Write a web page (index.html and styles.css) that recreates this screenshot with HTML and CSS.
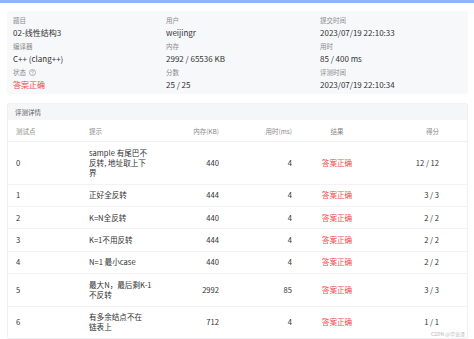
FILE: index.html
```html
<!DOCTYPE html>
<html lang="zh-CN">
<head>
    <meta charset="UTF-8">
    <meta name="viewport" content="width=device-width, initial-scale=1.0">
    <title>提交详情</title>
    <link rel="stylesheet" href="styles.css">
</head>
<body>
    <div class="topbar"></div>
    <div class="page">
        <div class="info-card">
            <div class="info-item">
                <div class="info-label">题目</div>
                <div class="info-value">02-线性结构3</div>
            </div>
            <div class="info-item">
                <div class="info-label">用户</div>
                <div class="info-value">weijingr</div>
            </div>
            <div class="info-item">
                <div class="info-label">提交时间</div>
                <div class="info-value">2023/07/19 22:10:33</div>
            </div>
            <div class="info-item">
                <div class="info-label">编译器</div>
                <div class="info-value">C++ (clang++)</div>
            </div>
            <div class="info-item">
                <div class="info-label">内存</div>
                <div class="info-value">2992 / 65536 KB</div>
            </div>
            <div class="info-item">
                <div class="info-label">用时</div>
                <div class="info-value">85 / 400 ms</div>
            </div>
            <div class="info-item">
                <div class="info-label">状态
                    <svg class="help-icon" viewBox="0 0 16 16" width="7" height="7">
                        <circle cx="8" cy="8" r="7" fill="none" stroke="#8a8a8a" stroke-width="1.4"/>
                        <path d="M5.8 6.2a2.2 2.2 0 1 1 3.2 2c-.7.4-1 .8-1 1.6" fill="none" stroke="#8a8a8a" stroke-width="1.4"/>
                        <circle cx="8" cy="11.8" r=".9" fill="#8a8a8a"/>
                    </svg>
                </div>
                <div class="info-value accepted">答案正确</div>
            </div>
            <div class="info-item">
                <div class="info-label">分数</div>
                <div class="info-value">25 / 25</div>
            </div>
            <div class="info-item">
                <div class="info-label">评测时间</div>
                <div class="info-value">2023/07/19 22:10:34</div>
            </div>
        </div>

        <div class="detail-card">
            <div class="detail-title">评测详情</div>
            <table class="detail-table">
                <colgroup>
                    <col class="c-case">
                    <col class="c-hint">
                    <col class="c-mem">
                    <col class="c-time">
                    <col class="c-result">
                    <col class="c-score">
                </colgroup>
                <thead>
                    <tr>
                        <th>测试点</th>
                        <th>提示</th>
                        <th class="num">内存(KB)</th>
                        <th class="num">用时(ms)</th>
                        <th class="center">结果</th>
                        <th class="num">得分</th>
                    </tr>
                </thead>
                <tbody>
                    <tr>
                        <td>0</td>
                        <td class="hint">sample 有尾巴不<br>反转, 地址取上下<br>界</td>
                        <td class="num">440</td>
                        <td class="num">4</td>
                        <td class="center accepted">答案正确</td>
                        <td class="num">12 / 12</td>
                    </tr>
                    <tr>
                        <td>1</td>
                        <td class="hint">正好全反转</td>
                        <td class="num">444</td>
                        <td class="num">4</td>
                        <td class="center accepted">答案正确</td>
                        <td class="num">3 / 3</td>
                    </tr>
                    <tr>
                        <td>2</td>
                        <td class="hint">K=N全反转</td>
                        <td class="num">440</td>
                        <td class="num">4</td>
                        <td class="center accepted">答案正确</td>
                        <td class="num">2 / 2</td>
                    </tr>
                    <tr>
                        <td>3</td>
                        <td class="hint">K=1不用反转</td>
                        <td class="num">444</td>
                        <td class="num">4</td>
                        <td class="center accepted">答案正确</td>
                        <td class="num">2 / 2</td>
                    </tr>
                    <tr>
                        <td>4</td>
                        <td class="hint">N=1 最小case</td>
                        <td class="num">440</td>
                        <td class="num">4</td>
                        <td class="center accepted">答案正确</td>
                        <td class="num">2 / 2</td>
                    </tr>
                    <tr>
                        <td>5</td>
                        <td class="hint">最大N，最后剩K-1<br>不反转</td>
                        <td class="num">2992</td>
                        <td class="num">85</td>
                        <td class="center accepted">答案正确</td>
                        <td class="num">3 / 3</td>
                    </tr>
                    <tr>
                        <td>6</td>
                        <td class="hint">有多余结点不在<br>链表上</td>
                        <td class="num">712</td>
                        <td class="num">4</td>
                        <td class="center accepted">答案正确</td>
                        <td class="num">1 / 1</td>
                    </tr>
                </tbody>
            </table>
            <div class="watermark">CSDN @华业泽</div>
        </div>
    </div>
</body>
</html>
```

FILE: styles.css
```css
body {
    font-family: "Noto Sans CJK SC", "Noto Sans", sans-serif;
    margin: 0;
    padding: 0;
    background-color: #fff;
    color: #333;
}
.topbar {
    height: 3px;
    background: #8cb6f4;
}
.page {
    padding: 8px 6px 0 7px;
}
.info-card {
    display: grid;
    grid-template-columns: 153px 154px 1fr;
    padding: 4px 6px 3px;
    background: #f7f8fa;
    border-radius: 2px;
}
.info-item {
    margin-bottom: 2px;
}
.info-item:nth-last-child(-n+3) {
    margin-bottom: 0;
}
.info-label {
    display: flex;
    align-items: center;
    gap: 3px;
    font-size: 6.5px;
    line-height: 11px;
    color: #8a8a8a;
}
.info-value {
    font-size: 8px;
    line-height: 13px;
    color: #333;
}
.accepted {
    color: #f2484b;
}
.detail-card {
    position: relative;
    margin-top: 9px;
    border: 1px solid #f0f1f3;
    border-radius: 2px;
}
.detail-title {
    height: 16px;
    line-height: 16px;
    padding-left: 7px;
    background: #f5f6f8;
    font-size: 6.5px;
    color: #555;
}
.detail-table {
    width: 100%;
    border-collapse: collapse;
    table-layout: fixed;
}
.c-case { width: 73px; }
.c-hint { width: 74px; }
.c-mem { width: 72px; }
.c-time { width: 73px; }
.c-result { width: 74px; }
.detail-table th {
    height: 21px;
    padding: 0 8px;
    font-size: 6.5px;
    font-weight: normal;
    color: #888;
    text-align: left;
    border-bottom: 1px solid #eeeff1;
}
.detail-table td {
    padding: 5.5px 8px;
    font-size: 7.6px;
    line-height: 10.3px;
    color: #333;
    border-bottom: 1px solid #f1f2f4;
}
.detail-table td.hint {
    padding-right: 0;
    white-space: nowrap;
}
.detail-table td.accepted {
    color: #f2484b;
}
.detail-table .num {
    text-align: right;
}
.detail-table .center {
    text-align: center;
}
.detail-table th:last-child,
.detail-table td:last-child {
    padding-right: 28px;
}
.detail-table tr:last-child td {
    border-bottom: none;
}
.watermark {
    position: absolute;
    right: 2px;
    bottom: 1px;
    font-size: 5px;
    color: #b5b5b5;
}
```
